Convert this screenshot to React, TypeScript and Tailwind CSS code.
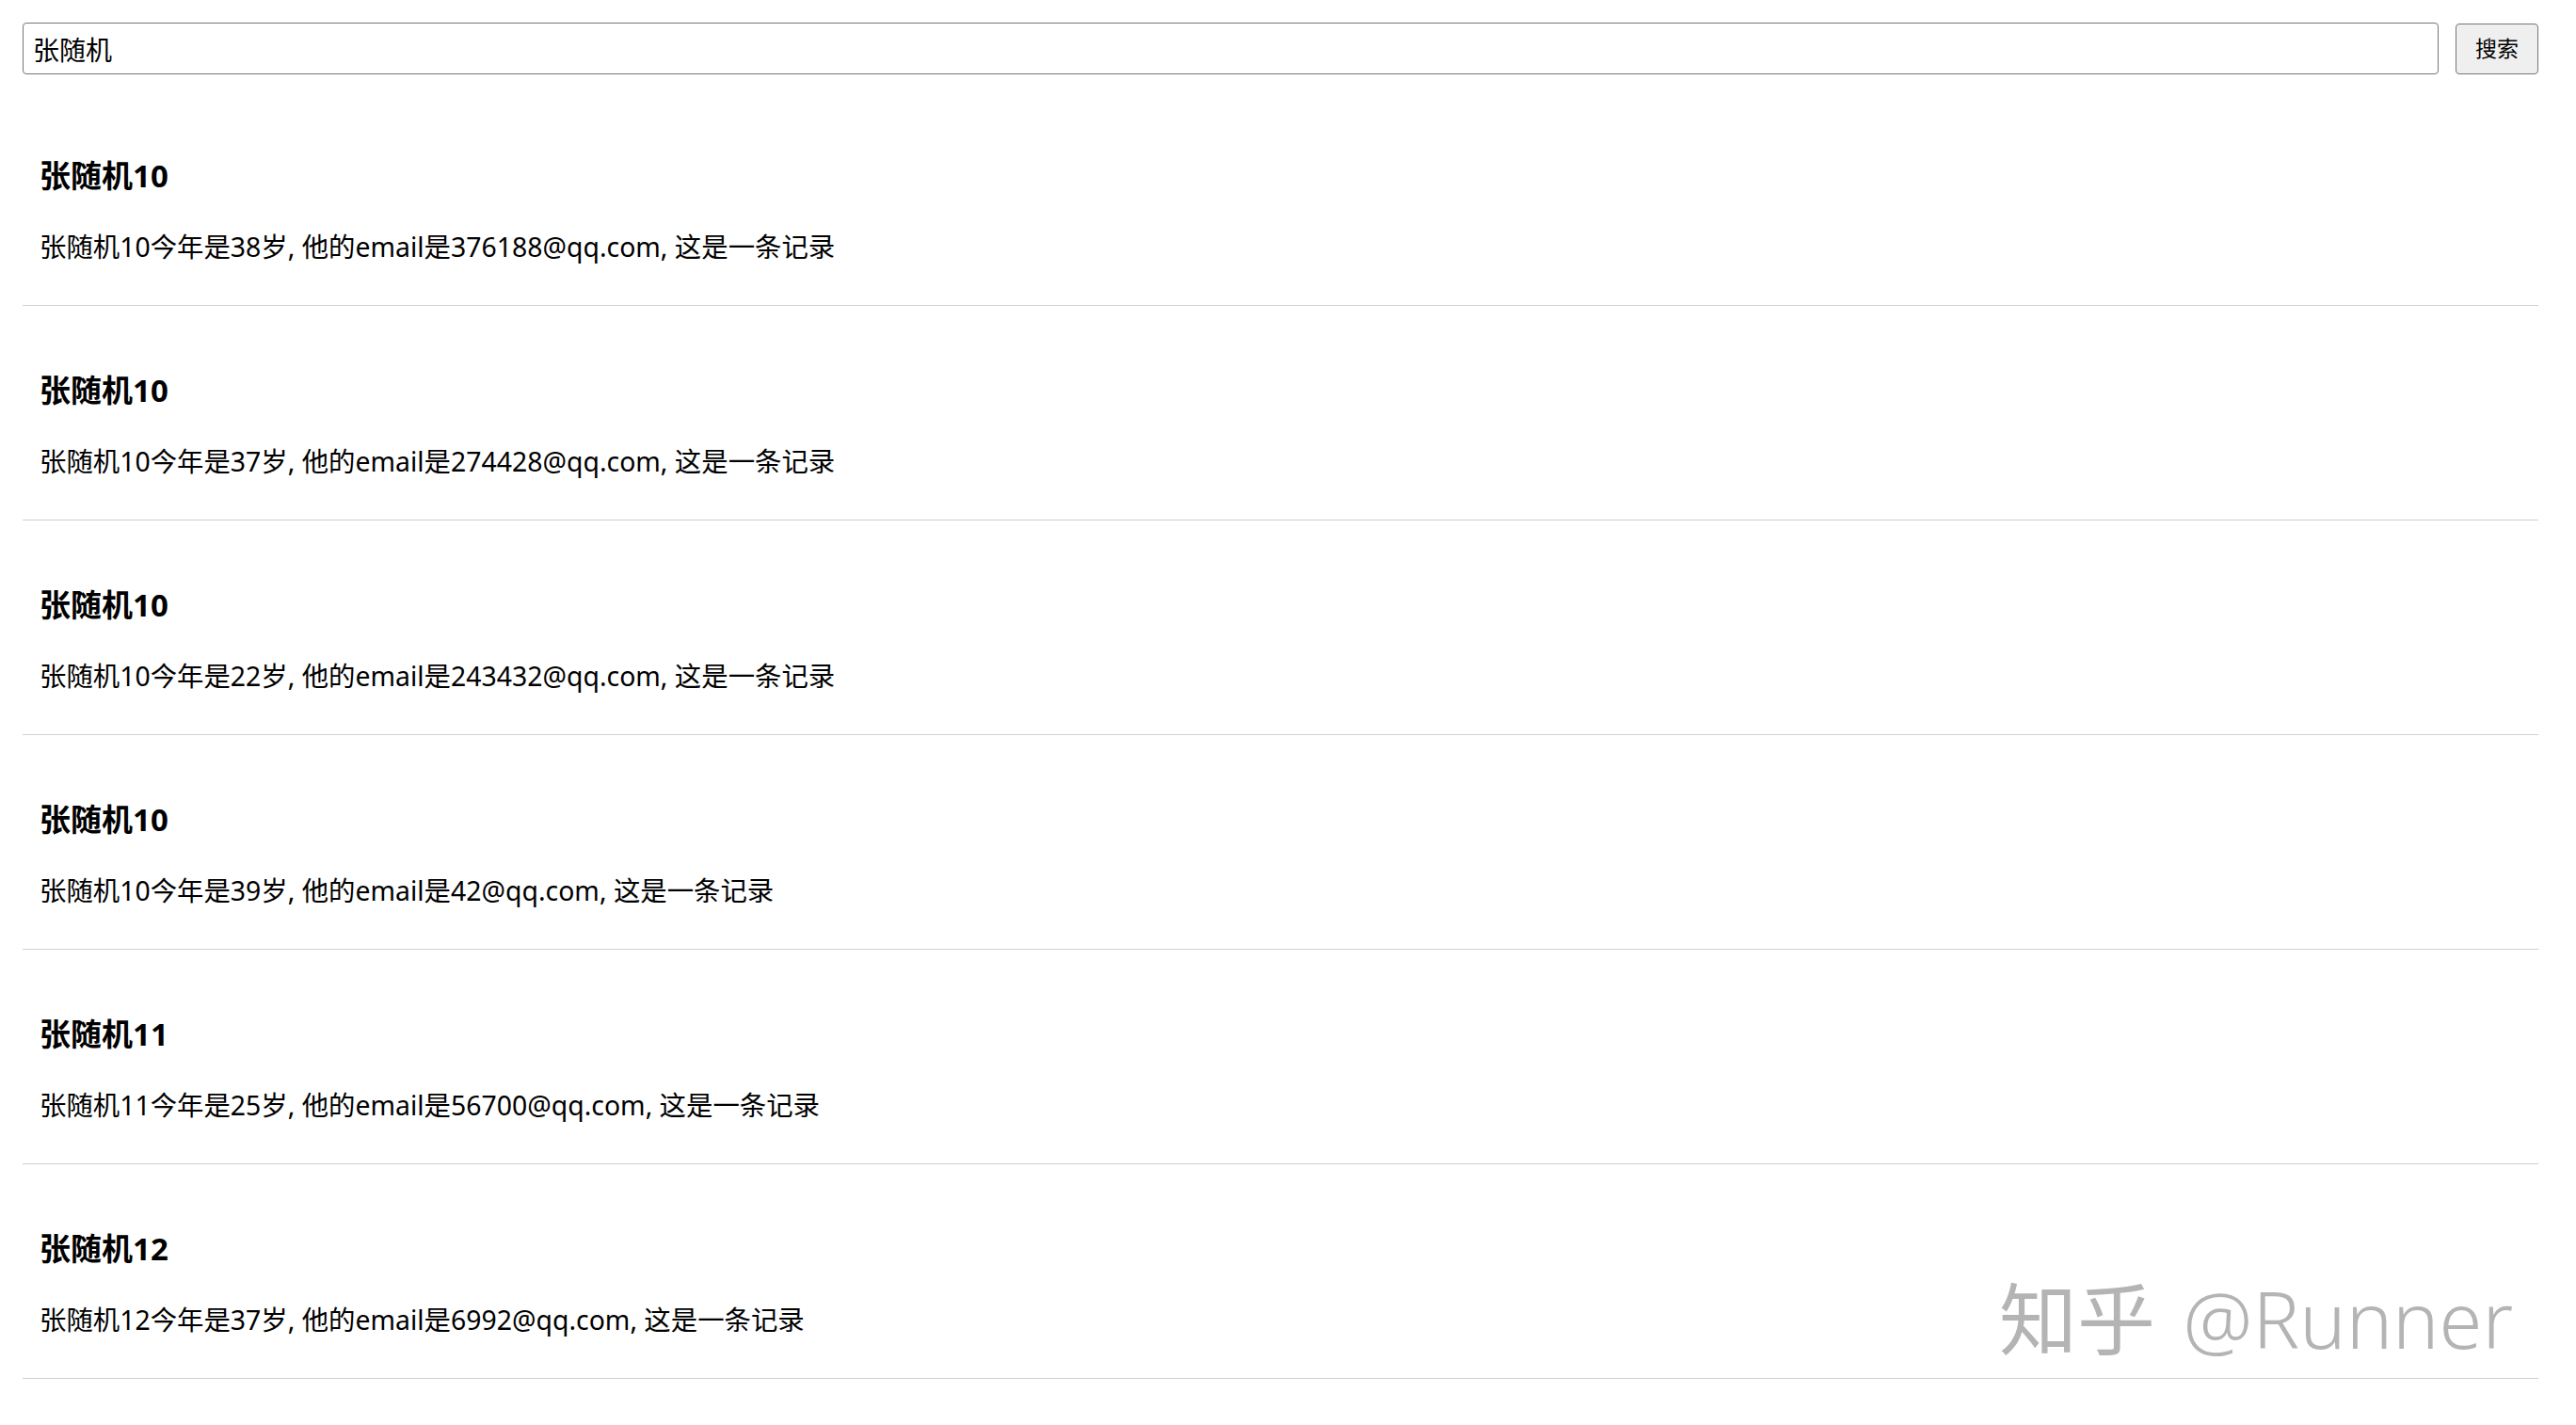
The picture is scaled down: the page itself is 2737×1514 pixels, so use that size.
const records = [
  { name: "张随机10", age: 38, email: "376188@qq.com" },
  { name: "张随机10", age: 37, email: "274428@qq.com" },
  { name: "张随机10", age: 22, email: "243432@qq.com" },
  { name: "张随机10", age: 39, email: "42@qq.com" },
  { name: "张随机11", age: 25, email: "56700@qq.com" },
  { name: "张随机12", age: 37, email: "6992@qq.com" },
];

export default function App() {
  return (
    <div className="relative w-full h-[1514px] overflow-hidden bg-white text-black font-['Noto_Sans','Noto_Sans_CJK_SC',sans-serif]">
      <div className="pl-[24px] pr-[40px] pt-[24px]">
        <div className="flex items-center gap-[18px]">
          <input
            defaultValue="张随机"
            className="flex-1 h-[55px] px-[10px] border border-[#767676] rounded-[4px] text-[28px] outline-none"
          />
          <button className="w-[88px] h-[54px] border border-[#767676] rounded-[4px] bg-[#efefef] text-[23px]">
            搜索
          </button>
        </div>

        <div className="mt-[18px]">
          {records.map((r, i) => (
            <div key={i} className="pl-[18px] pt-[70px] pb-[42px] border-b-[1.5px] border-[#d0d0d0]">
              <h3 className="text-[33px] font-bold leading-[40px]">{r.name}</h3>
              <p className="mt-[35px] text-[28.4px] leading-[40px]">
                {r.name}今年是{r.age}岁, 他的email是{r.email}, 这是一条记录
              </p>
            </div>
          ))}
        </div>
      </div>

      <div className="absolute left-[2124px] top-[1346px] text-[83px] leading-[110px] text-[#b4b4b4] whitespace-nowrap">
        知乎 <span className="ml-[8px] font-light">@Runner</span>
      </div>
    </div>
  );
}
